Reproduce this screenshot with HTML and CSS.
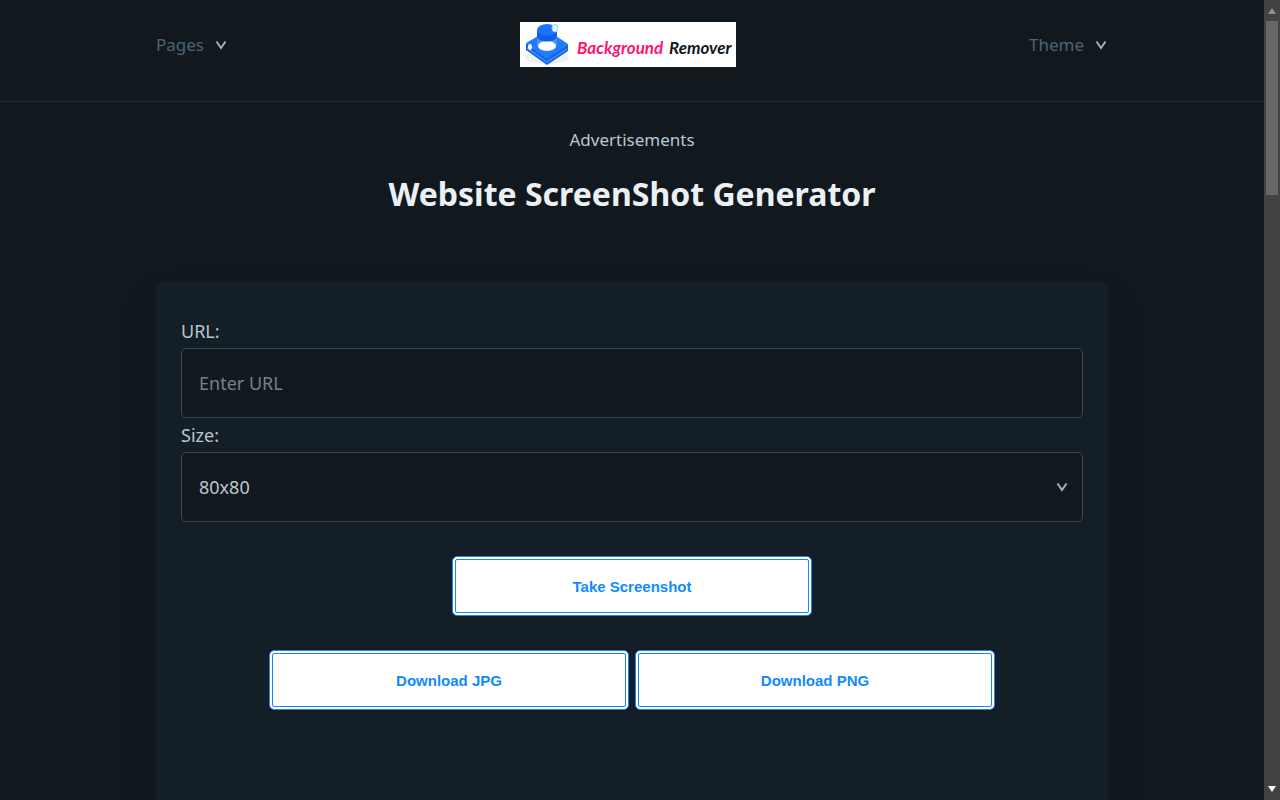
FILE: index.html
```html
<!DOCTYPE html>
<html lang="en">
<head>
    <meta charset="UTF-8">
    <meta name="viewport" content="width=device-width, initial-scale=1">
    <title>Website ScreenShot Generator</title>
    <link rel="stylesheet" href="styles.css">
</head>
<body>
    <div class="page">
        <header>
            <nav class="container">
                <button type="button" class="menu">Pages
                    <svg class="chevron" viewBox="0 0 14 10"><path d="M2.5 1.5 7 8 11.5 1.5"/></svg>
                </button>
                <a href="#" class="logo" aria-label="Background Remover">
                    <svg viewBox="0 0 216 45">
                        <rect width="216" height="45" fill="#fff"/>
                        <ellipse cx="27" cy="35" rx="22" ry="7" fill="#f1f1f3"/>
                        <path d="M6 21v7l21 15 21-14v-7L27 36z" fill="#1267ea"/>
                        <path d="M6 21 18 14h18l12 8-21 15z" fill="#257bff"/>
                        <path d="M7 26l20 14 20-13" fill="none" stroke="#5aa2ff"/>
                        <path d="M17 10v13c3 7 17 7 20 0V10z" fill="#4c91fa"/>
                        <ellipse cx="27" cy="24" rx="9" ry="5" fill="#fff"/>
                        <path d="M17 9v6c3 6 17 6 20 0V9z" fill="#0f60e5"/>
                        <ellipse cx="27" cy="8" rx="10" ry="6" fill="#1b72fb"/>
                        <ellipse cx="35" cy="6" rx="3" ry="4" fill="#e2f4ff" stroke="#9bd4ff"/>
                        <ellipse cx="10" cy="25" rx="2" ry="3" fill="#eef8ff"/>
                        <text x="57" y="32" class="logo-pink">Background</text>
                        <text x="149" y="32" class="logo-dark">Remover</text>
                    </svg>
                </a>
                <button type="button" class="menu">Theme
                    <svg class="chevron" viewBox="0 0 14 10"><path d="M2.5 1.5 7 8 11.5 1.5"/></svg>
                </button>
            </nav>
        </header>

        <main class="container">
            <p class="ads">Advertisements</p>
            <h1>Website ScreenShot Generator</h1>

            <form class="card">
                <label for="url">URL:</label>
                <input type="text" id="url" placeholder="Enter URL">
                <label for="size">Size:</label>
                <div class="select">
                    <select id="size">
                        <option>80x80</option>
                    </select>
                    <svg class="chevron" viewBox="0 0 14 10"><path d="M2.5 1.5 7 8 11.5 1.5"/></svg>
                </div>
                <div class="actions">
                    <button type="button" class="btn">Take Screenshot</button>
                </div>
                <div class="actions">
                    <button type="button" class="btn">Download JPG</button>
                    <button type="button" class="btn">Download PNG</button>
                </div>
            </form>
        </main>
    </div>

    <div class="scrollbar">
        <svg class="arrow" viewBox="0 0 8 6"><path d="M4 0 8 6H0z" fill="#8f8f8f"/></svg>
        <div class="thumb"></div>
        <svg class="arrow" viewBox="0 0 8 6"><path d="M0 0H8L4 6z" fill="#fff"/></svg>
    </div>
</body>
</html>
```

FILE: styles.css
```css
* {
    box-sizing: border-box;
}

body {
    margin: 0;
    height: 100vh;
    display: flex;
    overflow: hidden;
    background-color: #11191f;
    color: #bbc6ce;
    font-family: "Noto Sans", "Open Sans", sans-serif;
    font-size: 17px;
    line-height: 28px;
}

.page {
    flex: 1;
    overflow: hidden;
    display: flex;
    flex-direction: column;
}

.container {
    width: 100%;
    max-width: 952px;
    margin: 0 auto;
}

header {
    flex: none;
    border-bottom: 1px solid #1f2d38;
}

nav {
    display: flex;
    justify-content: space-between;
    align-items: flex-start;
    padding: 22px 0 34px;
}

.menu {
    display: flex;
    align-items: center;
    gap: 10px;
    height: 45px;
    padding: 0;
    border: none;
    background: none;
    color: #4d6475;
    font: inherit;
    cursor: pointer;
}

.chevron {
    width: 14px;
    height: 10px;
    fill: none;
    stroke: #a2afb9;
    stroke-width: 2;
}

.logo,
.logo svg {
    display: block;
    width: 216px;
    height: 45px;
}

.logo text {
    font-family: Lato, "Liberation Sans", sans-serif;
    font-size: 17px;
    font-weight: bold;
    font-style: italic;
}

.logo-pink {
    fill: #ff1474;
}

.logo-dark {
    fill: #12181c;
}

main {
    flex: 1;
    display: flex;
    flex-direction: column;
    padding-top: 24px;
    text-align: center;
}

.ads {
    margin: 0;
}

h1 {
    margin: 14px 0 61px;
    color: #edf0f3;
    font-size: 32px;
    line-height: 52px;
}

.card {
    flex: 1;
    padding: 33px 25px;
    border-radius: 5px 5px 0 0;
    background-color: #141e26;
    box-shadow: 0 24px 40px rgba(0, 0, 0, 0.12);
    font-size: 18px;
    text-align: left;
}

label {
    display: block;
    line-height: 34px;
}

input,
select {
    display: block;
    width: 100%;
    height: 70px;
    padding: 0 17px;
    border: 1px solid #374956;
    border-radius: 5px;
    outline: none;
    appearance: none;
    background-color: #11191f;
    color: #bbc6ce;
    font: inherit;
}

input::placeholder {
    color: #73828c;
    opacity: 1;
}

.select {
    position: relative;
}

.select .chevron {
    position: absolute;
    right: 14px;
    top: 30px;
    pointer-events: none;
}

.actions {
    display: flex;
    justify-content: center;
    gap: 6px;
    margin-top: 34px;
}

.btn {
    width: 360px;
    height: 60px;
    border: 4px double #1a86ee;
    border-radius: 5px;
    background-color: #fff;
    color: #108aff;
    font-family: "Liberation Sans", Arial, sans-serif;
    font-size: 15px;
    font-weight: bold;
    cursor: pointer;
}

.scrollbar {
    display: flex;
    flex-direction: column;
    align-items: center;
    width: 16px;
    padding: 8px 2px;
    background-color: #424242;
}

.arrow {
    width: 8px;
    height: 6px;
}

.thumb {
    width: 12px;
    height: 174px;
    margin: 7px 0 auto;
    background-color: #686868;
}
```
